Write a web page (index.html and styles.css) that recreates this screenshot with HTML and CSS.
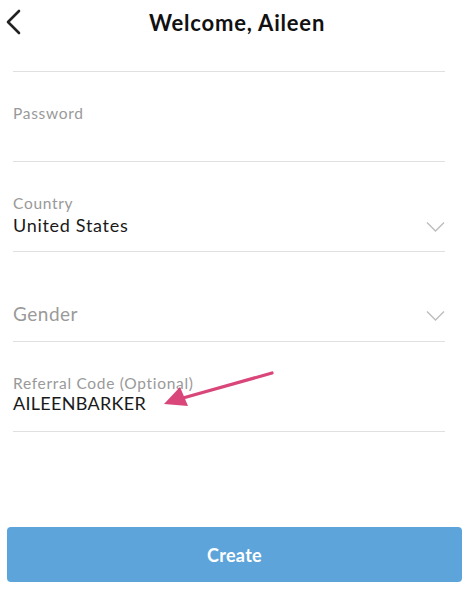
FILE: index.html
```html
<!DOCTYPE html>
<html>
<head>
<meta charset="utf-8">
<link rel="stylesheet" href="styles.css">
</head>
<body>
<div class="screen">
  <header class="header">
    <svg class="back" width="20" height="28" viewBox="0 0 20 28"><path d="M14 2 L3 13 L14 24" fill="none" stroke="#222" stroke-width="2.6" stroke-linecap="round" stroke-linejoin="round"/></svg>
    <h1 class="title">Welcome, Aileen</h1>
  </header>
  <div class="form">
    <div class="field field-top"></div>
    <div class="field">
      <div class="label">Password</div>
    </div>
    <div class="field select">
      <div class="texts">
        <div class="label">Country</div>
        <div class="value value-country">United States</div>
      </div>
      <svg class="chev chev-country" width="20" height="12" viewBox="0 0 20 12"><path d="M1 1.5 L9.5 10 L18 1.5" fill="none" stroke="#bdbdbd" stroke-width="1.4"/></svg>
    </div>
    <div class="field select">
      <div class="placeholder">Gender</div>
      <svg class="chev chev-gender" width="20" height="12" viewBox="0 0 20 12"><path d="M1 1.5 L9.5 10 L18 1.5" fill="none" stroke="#bdbdbd" stroke-width="1.4"/></svg>
    </div>
    <div class="field referral">
      <div class="label">Referral Code (Optional)</div>
      <div class="value">AILEENBARKER</div>
      <svg class="arrow" width="120" height="40" viewBox="0 0 120 40"><path d="M111 4 L22 29" stroke="#d9467a" stroke-width="3.2" stroke-linecap="round"/><path d="M3 35 L19 18 L27 37 Z" fill="#d9467a"/></svg>
    </div>
  </div>
  <div class="spacer"></div>
  <button class="create">Create</button>
</div>
</body>
</html>
```

FILE: styles.css
```css
* { box-sizing: border-box; }
html, body { margin: 0; padding: 0; background: #fff; }
body { font-family: Lato, "Open Sans", sans-serif; width: 474px; height: 594px; overflow: hidden; }
.screen { display: flex; flex-direction: column; height: 594px; }
.header { position: relative; height: 45px; display: flex; align-items: center; justify-content: center; }
.back { position: absolute; left: 5px; top: 9px; }
.title { margin: 0; font-size: 22px; font-weight: 700; color: #111; letter-spacing: 0.8px; }
.form { padding: 0 29px 0 13px; }
.field { height: 90px; border-bottom: 1.5px solid #e0e0e0; position: relative; padding-top: 32px; }
.field-top { height: 27px; padding: 0; }
.label { font-size: 15.5px; color: #999; line-height: 18px; letter-spacing: 0.7px; }
.value { font-size: 18px; color: #1a1a1a; line-height: 22px; letter-spacing: 0.3px; }
.value-country { margin-top: 2px; letter-spacing: 0.7px; }
.select { display: flex; align-items: flex-start; justify-content: space-between; }
.select .texts { flex: 1; }
.chev { margin-right: -1px; }
.chev-country { margin-top: 27px; }
.chev-gender { margin-top: 26px; }
.placeholder { font-size: 19px; color: #9a9a9a; padding-top: 18px; letter-spacing: 0.5px; }
.arrow { position: absolute; left: 148px; top: 27px; }
.spacer { flex: 1; }
.create { margin: 0 12px 12px 7px; height: 55px; border: none; border-radius: 4px; background: #5ca4d9; color: #fff; font-family: Lato, sans-serif; font-size: 18px; font-weight: 700; letter-spacing: 0.3px; }
```
